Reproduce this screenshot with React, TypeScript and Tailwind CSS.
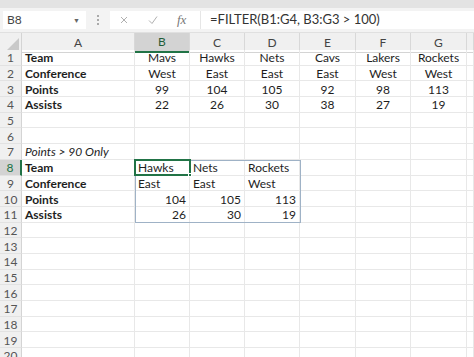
import React from 'react';

const COLS = ['A', 'B', 'C', 'D', 'E', 'F', 'G', ''];
const COL_W = 'grid-cols-[22px_113px_55px_55px_55px_56px_55px_56px_1fr]';

type Cell = { v: string; bold?: boolean; italic?: boolean; align?: 'l' | 'c' | 'r' };

const DATA: Record<number, Cell[]> = {
  1: [{ v: 'Team', bold: true }, { v: 'Mavs', align: 'c' }, { v: 'Hawks', align: 'c' }, { v: 'Nets', align: 'c' }, { v: 'Cavs', align: 'c' }, { v: 'Lakers', align: 'c' }, { v: 'Rockets', align: 'c' }],
  2: [{ v: 'Conference', bold: true }, { v: 'West', align: 'c' }, { v: 'East', align: 'c' }, { v: 'East', align: 'c' }, { v: 'East', align: 'c' }, { v: 'West', align: 'c' }, { v: 'West', align: 'c' }],
  3: [{ v: 'Points', bold: true }, { v: '99', align: 'c' }, { v: '104', align: 'c' }, { v: '105', align: 'c' }, { v: '92', align: 'c' }, { v: '98', align: 'c' }, { v: '113', align: 'c' }],
  4: [{ v: 'Assists', bold: true }, { v: '22', align: 'c' }, { v: '26', align: 'c' }, { v: '30', align: 'c' }, { v: '38', align: 'c' }, { v: '27', align: 'c' }, { v: '19', align: 'c' }],
  7: [{ v: 'Points > 90 Only', italic: true }],
  8: [{ v: 'Team', bold: true }, { v: 'Hawks' }, { v: 'Nets' }, { v: 'Rockets' }],
  9: [{ v: 'Conference', bold: true }, { v: 'East' }, { v: 'East' }, { v: 'West' }],
  10: [{ v: 'Points', bold: true }, { v: '104', align: 'r' }, { v: '105', align: 'r' }, { v: '113', align: 'r' }],
  11: [{ v: 'Assists', bold: true }, { v: '26', align: 'r' }, { v: '30', align: 'r' }, { v: '19', align: 'r' }],
};

function cellClass(c: Cell | undefined) {
  const a = c?.align === 'c' ? 'justify-center' : c?.align === 'r' ? 'justify-end' : 'justify-start';
  return `flex items-center px-[3px] pt-[2px] whitespace-nowrap overflow-visible ${a} ${c?.bold ? 'font-bold' : ''} ${c?.italic ? 'italic' : ''}`;
}

export default function App() {
  const rows = Array.from({ length: 20 }, (_, i) => i + 1);
  return (
    <div className="w-[474px] h-[357px] overflow-hidden bg-white text-[#1e1e1e] font-['Lato',sans-serif] text-[12px]">
      <div className="h-[8px] bg-[#e3e3e3]" />
      <div className="h-[25px] bg-[#f3f3f3] flex items-center pl-[3px] border-b border-[#e0e0e0]">
        <div className="w-[83px] h-[18px] bg-white flex items-center justify-between px-[4px] text-[#444] text-[12px]">
          <span>B8</span>
          <span className="text-[7px] text-[#666] pr-[2px]">▼</span>
        </div>
        <div className="w-[24px] flex flex-col items-center gap-[2px]">
          <span className="w-[2px] h-[2px] bg-[#aaa]" />
          <span className="w-[2px] h-[2px] bg-[#aaa]" />
          <span className="w-[2px] h-[2px] bg-[#aaa]" />
        </div>
        <div className="w-[90px] h-[18px] bg-white flex items-center">
          <svg width="12" height="12" viewBox="0 0 12 12" className="ml-[8px]" fill="none" stroke="#b0b0b0" strokeWidth="1">
            <path d="M3 3l6 6M9 3l-6 6" />
          </svg>
          <svg width="12" height="12" viewBox="0 0 12 12" className="ml-[17px]" fill="none" stroke="#b0b0b0" strokeWidth="1">
            <path d="M2 6.5l3 3 5-7" />
          </svg>
          <span className="ml-[18px] italic font-['Liberation_Serif',serif] text-[13px] text-[#777]">fx</span>
        </div>
        <div className="flex-1 h-[18px] bg-white flex items-center pl-[9px] text-[13px] text-[#333] border-l border-[#e6e6e6]">
          =FILTER(B1:G4, B3:G3 &gt; 100)
        </div>
      </div>
      <div className={`grid ${COL_W} h-[17px] bg-[#f0f0f0] text-[#444] text-[12px]`}>
        <div className="relative border-r border-b border-[#d4d4d4]">
          <div className="absolute right-[2px] bottom-[2px] w-0 h-0 border-l-[12px] border-l-transparent border-b-[12px] border-b-[#c9c9c9]" />
        </div>
        {COLS.map((c, i) => (
          <div
            key={i}
            className={`flex items-center justify-center border-r border-[#d8d8d8] ${c === 'B' ? 'bg-[#d3d3d3] border-b-2 border-b-[#217346] text-[#1f5c38]' : 'border-b border-b-[#d4d4d4]'}`}
          >
            {c}
          </div>
        ))}
      </div>
      <div className="relative">
        {rows.map((r) => {
          const d = DATA[r] || [];
          return (
            <div key={r} className={`grid ${COL_W} h-[15.7px] leading-none`}>
              <div
                className={`flex items-center justify-center pt-[2px] text-[12px] border-b border-[#e2e2e2] ${r === 8 ? 'bg-[#d3d3d3] text-[#217346] border-r-2 border-r-[#217346]' : 'bg-[#f0f0f0] text-[#555] border-r border-r-[#d4d4d4]'}`}
              >
                {r}
              </div>
              {COLS.map((_, ci) => {
                const c = d[ci];
                return (
                  <div key={ci} className={`border-r border-b border-[#e8e8e8] text-[12px] ${cellClass(c)}`}>
                    {c?.v}
                  </div>
                );
              })}
            </div>
          );
        })}
        {/* spill range border */}
        <div className="absolute left-[135px] top-[109.9px] w-[166px] h-[62.8px] border border-[#9fb2c6] pointer-events-none" />
        {/* active cell */}
        <div className="absolute left-[134px] top-[109px] w-[57px] h-[17px] border-2 border-[#217346] pointer-events-none">
          <div className="absolute -right-[3px] -bottom-[3px] w-[4px] h-[4px] bg-[#217346] border border-white" />
        </div>
      </div>
    </div>
  );
}
